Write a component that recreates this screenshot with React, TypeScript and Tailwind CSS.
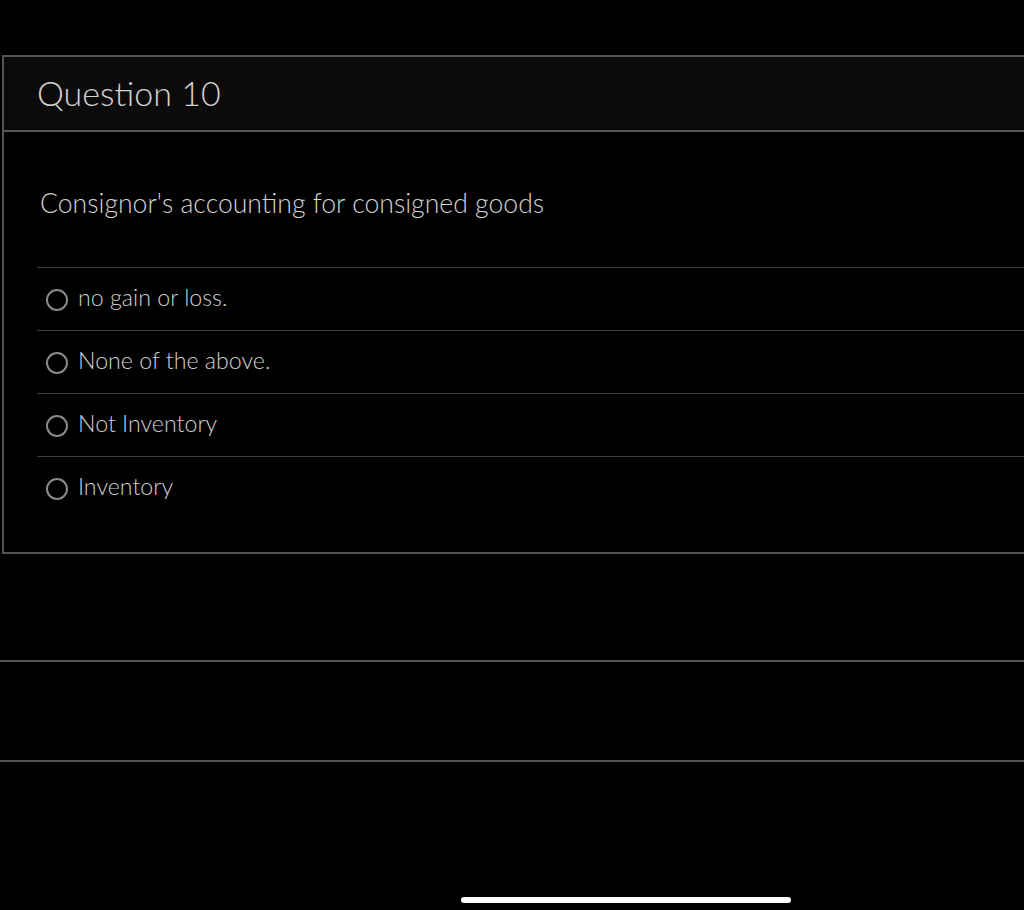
import React from "react";

const answers = ["no gain or loss.", "None of the above.", "Not Inventory", "Inventory"];

export default function App() {
  return (
    <div
      className="relative w-[1024px] h-[910px] overflow-hidden bg-black"
      style={{ fontFamily: "Lato, 'Open Sans', sans-serif" }}
    >
      <div className="pt-[55px] pl-[2px]">
        <div className="w-[1100px] border-2 border-[#545454]">
          <div className="h-[75px] bg-[#0b0b0b] border-b-2 border-[#545454] flex items-center pl-[33px] pb-[3px]">
            <span className="text-[34px] font-light text-[#d4d4d4]">Question 10</span>
          </div>
          <div className="pt-[56px] pb-[33px]">
            <div className="pl-[36px] text-[26.6px] font-light text-[#d2d2d2] leading-[30px]">
              Consignor's accounting for consigned goods
            </div>
            <div className="ml-[33px] mt-[49px]">
              {answers.map((a) => (
                <div key={a} className="h-[63px] border-t border-[#3c3c3c] flex items-center">
                  <div className="ml-[9px] w-[22px] h-[22px] rounded-full border-2 border-[#8a8a8a] mt-[1px]" />
                  <span className="ml-[10px] text-[23.2px] font-light text-[#cfcfcf] mb-[3px]">{a}</span>
                </div>
              ))}
            </div>
          </div>
        </div>
      </div>
      <div className="mt-[106px] h-[2px] bg-[#545454]" />
      <div className="mt-[98px] h-[2px] bg-[#545454]" />
      <div className="absolute left-[461px] top-[897px] w-[330px] h-[6px] rounded-full bg-white" />
    </div>
  );
}
